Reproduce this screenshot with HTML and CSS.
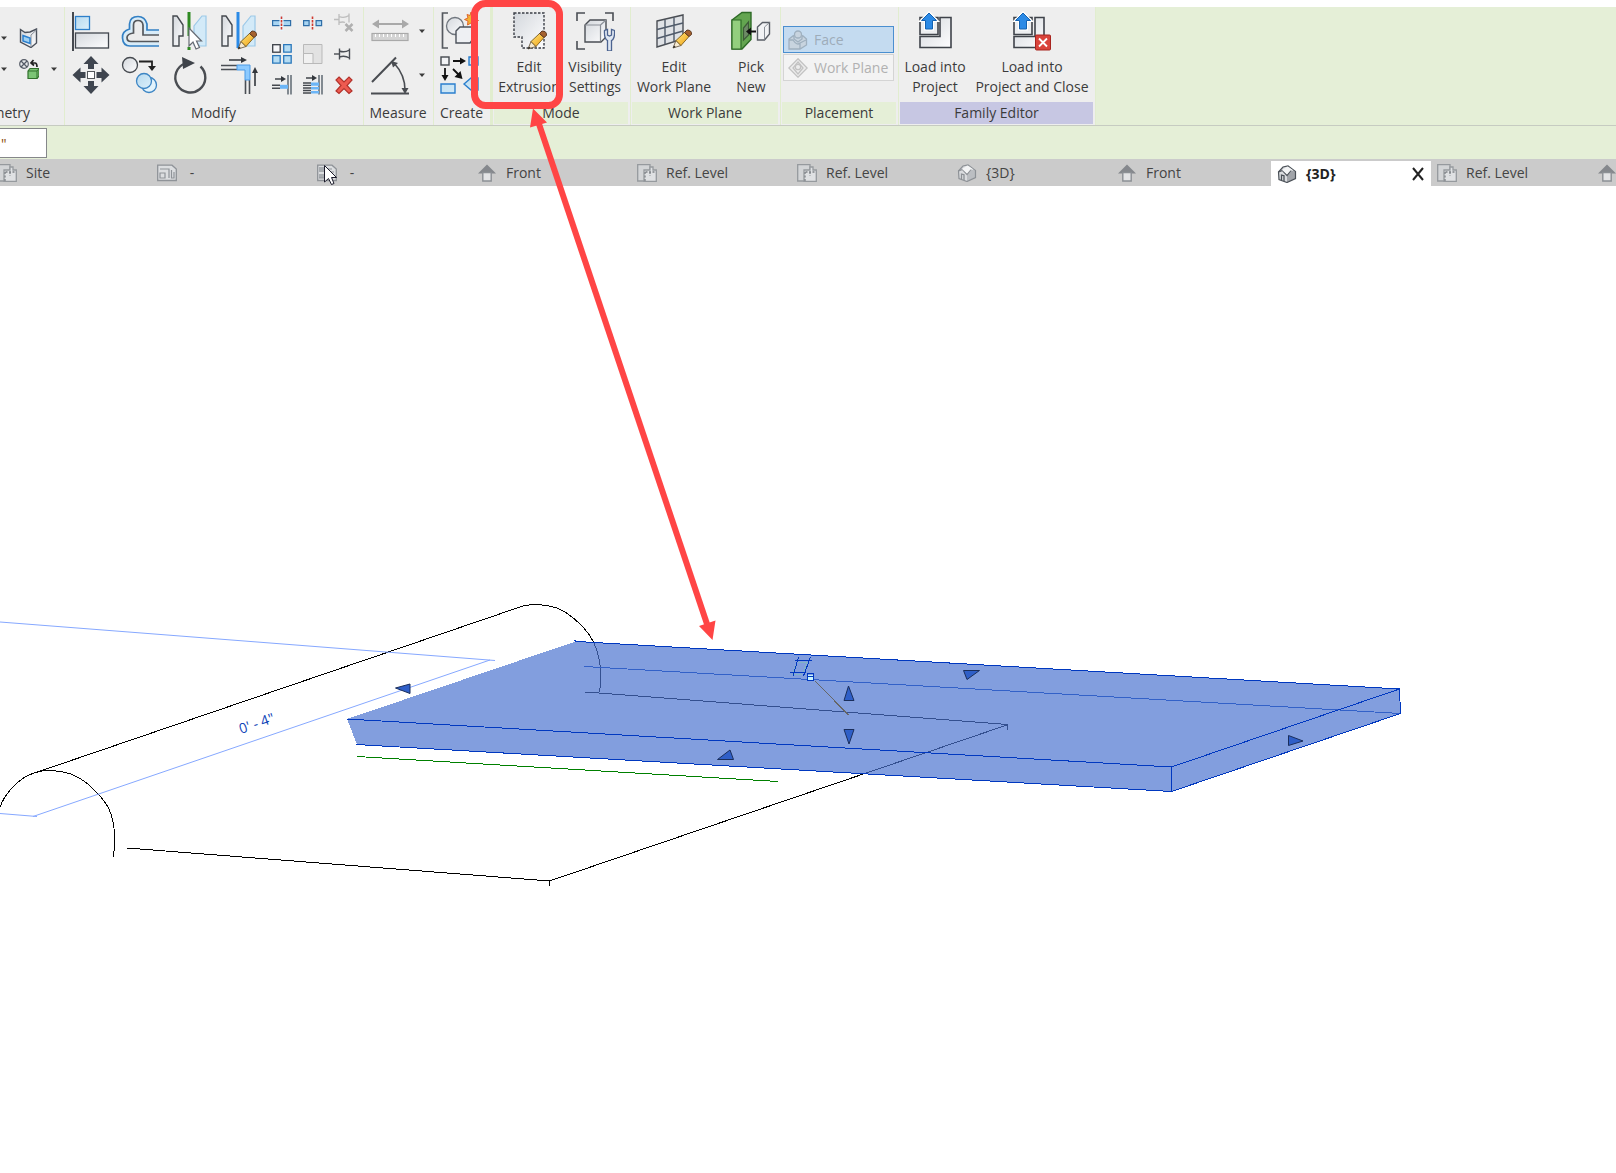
FILE: index.html
```html
<!DOCTYPE html>
<html lang="en">
<head>
  <meta charset="utf-8">
  <title>Family Editor</title>
  <link rel="stylesheet" href="styles.css">
</head>
<body>

  <!-- shared icon parts -->
  <svg class="defs" aria-hidden="true">
    <defs>
      <linearGradient id="silver" x1="0" y1="0" x2="1" y2="1">
        <stop offset="0" stop-color="#d4d8dd"/><stop offset="1" stop-color="#fdfdfe"/>
      </linearGradient>
      <linearGradient id="sky" x1="0" y1="0" x2="1" y2="1">
        <stop offset="0" stop-color="#b7d9ee"/><stop offset="1" stop-color="#dcf0fb"/>
      </linearGradient>
      <linearGradient id="gold" x1="0" y1="0" x2="1" y2="1">
        <stop offset="0" stop-color="#ffe680"/><stop offset="1" stop-color="#f0a010"/>
      </linearGradient>
      <symbol id="pencil" viewBox="0 0 20 20">
        <path d="M1 19L4 11.500L9 16.500Z" fill="#f6ead2" stroke="#5a4a35" stroke-width=".8"/>
        <path d="M1 19l1-2.600 1.700 1.600z" fill="#222"/>
        <path d="M4 11.500L12.500 3.500L17 7.500L9 16.500Z" fill="url(#gold)" stroke="#7a5a1a" stroke-width=".9"/>
        <path d="M12.500 3.500L15 1Q20 1 19.500 5.500L17 7.500Z" fill="#a5622f" stroke="#54301a" stroke-width=".9"/>
      </symbol>
      <symbol id="t-plan" viewBox="0 0 20 18">
        <path d="M.7.700H13V17H.7Z" fill="#d3d5d7" stroke="#969a9e" stroke-width="1.300"/>
        <path d="M7 6H13V3H16V6H19.300V17.300H7Z" fill="#dfe1e3" stroke="#969a9e" stroke-width="1.300"/>
        <path d="M8.500 8H18M8 8v9M13 8v4" fill="none" stroke="#7f8388" stroke-width="1.300" stroke-dasharray="2 1.500"/>
      </symbol>
      <symbol id="t-sheet" viewBox="0 0 20 18">
        <path d="M.7 1.200H15L19.300 5V16.500H.7Z" fill="#dcdee0" stroke="#8f9398" stroke-width="1.300"/>
        <path d="M3 5h9v9M3 9h5v5H3zM14.500 6v8h2.500V8" fill="none" stroke="#8f9398" stroke-width="1.200"/>
      </symbol>
      <symbol id="t-sched" viewBox="0 0 20 18">
        <path d="M.7 1.200H15L19.300 5V16.500H.7Z" fill="#dcdee0" stroke="#8f9398" stroke-width="1.300"/>
        <path d="M2 3h7v5H2zM2 10h7v4H2z" fill="#a8acb0"/>
        <path d="M10 5h5M10 8h7M10 12h7M2 14h14" stroke="#8f9398" fill="none"/>
      </symbol>
      <symbol id="t-elev" viewBox="0 0 20 18">
        <path d="M1 9.500L10 .5L19 9.500Z" fill="#85888d"/>
        <path d="M5.800 8.500H14.200V17H5.800Z" fill="#e3e4e6" stroke="#8c9095" stroke-width="1.400"/>
      </symbol>
      <symbol id="t-home" viewBox="0 0 20 18">
        <path d="M1.500 7L6 2L11 .8L18.500 6.500V13.500L10 17.500L2 14.500Z" fill="#dadcdf" stroke="currentColor" stroke-width="1.200"/>
        <path d="M10 17.500V10.500L14 5L18.500 7V13.500Z" fill="currentColor" opacity=".4"/>
        <path d="M1.500 7L5.500 5.500L10 10.500L14 5M4.500 15V10l2.500.7V16" fill="none" stroke="currentColor" stroke-width="1.300"/>
        <path d="M5 5L10.500 1.500L16.500 5.500L13.500 5.500L10 9.500Z" fill="#f3f4f5"/>
      </symbol>
      <symbol id="caret" viewBox="0 0 8 8"><path d="M1 2.500h6L4 6z" fill="currentColor"/></symbol>
    </defs>
  </svg>

  <header class="ribbon">
    <section class="panel panel-geometry">
      <div class="panel-body geometry-tools">
        <button class="drop" aria-label="Cope options"><svg><use href="#caret"/></svg></button>
        <button class="tool-sm" aria-label="Wall opening">
          <svg viewBox="0 0 20 20"><path d="M1.500 1.500L6 4.500L11 4L17.500 1V15L12 19.500L1.500 14Z" fill="url(#silver)" stroke="#4b515c" stroke-width="1.400"/><path d="M12 19V7l5.500-5" fill="none" stroke="#8a919b"/><path d="M4 7.500l7 2.500v5.500L4 13z" fill="#9fd0f2" stroke="#2b7fce" stroke-width="1.500"/></svg>
        </button>
        <span></span>
        <button class="drop" aria-label="Join options"><svg><use href="#caret"/></svg></button>
        <button class="tool-sm" aria-label="Paint">
          <svg viewBox="0 0 20 20"><circle cx="5" cy="5" r="4.300" fill="#e6e8ea" stroke="#555b66" stroke-width="1.200"/><path d="M2 2l6 6M8 2L2 8" stroke="#555b66" stroke-width="1.300"/><path d="M13 4h3q2 0 2 4M14.500 1L12 4l3 2.500" fill="none" stroke="#222" stroke-width="1.700"/><path d="M9 12l2-2.500h9V17l-2 2.500H9z" fill="#7cc576" stroke="#31702c" stroke-width="1.200"/><path d="M9 12h9v7.500M18 12l2-2.500" fill="none" stroke="#31702c"/></svg>
        </button>
        <button class="drop" aria-label="Paint options"><svg><use href="#caret"/></svg></button>
      </div>
      <h2 class="panel-title">Geometry</h2>
    </section>

    <section class="panel panel-modify">
      <div class="panel-body modify-tools">
        <div class="grid-lg">
          <button class="tool" aria-label="Align">
            <svg viewBox="0 0 40 40"><path d="M2 1v39" stroke="#45494f" stroke-width="2"/><rect x="4.500" y="5.500" width="14" height="13" fill="url(#sky)" stroke="#2d7fca" stroke-width="1.300"/><rect x="4.500" y="22" width="33" height="15" fill="url(#silver)" stroke="#40464e" stroke-width="1.300"/></svg>
          </button>
          <button class="tool" aria-label="Offset">
            <svg viewBox="0 0 40 40" fill="none"><path d="M38 19H26V13Q24 5.500 17 5.500Q9 5.500 8.500 13V18Q1 20 1.500 27Q2 35 9 35H38" fill="#d9ecf8" stroke="#3380c4" stroke-width="1.700"/><path d="M38 24H22V14Q21.500 9.500 17 9.500Q12.500 9.500 12.500 14V22Q6 23 6 26.500Q6 30.500 10 30.500H38" fill="#ececec" stroke="#55585c" stroke-width="1.700"/></svg>
          </button>
          <button class="tool" aria-label="Mirror - Pick Axis">
            <svg viewBox="0 0 40 40"><path d="M2 5h4l6 9v11H8v10H2z" fill="url(#silver)" stroke="#45494f" stroke-width="1.400"/><path d="M35 5h-4l-8 10v19h5v1h7z" fill="#d3eaf8" stroke="#9cc9e8" stroke-width="1.200"/><path d="M18 1v24M18 36v3" stroke="#2f8a22" stroke-width="3"/><path d="M18 17v18l4-4 3 7 3.500-1.500-3-6.500h5z" fill="#fff" stroke="#666b73" stroke-width="1.200"/></svg>
          </button>
          <button class="tool" aria-label="Mirror - Draw Axis">
            <svg viewBox="0 0 40 40"><path d="M1 5h4l6 9v11H7v10H1z" fill="url(#silver)" stroke="#45494f" stroke-width="1.400"/><path d="M34 5h-4l-8 10v20h12z" fill="#d3eaf8" stroke="#9cc9e8" stroke-width="1.200"/><path d="M17 1v36" stroke="#2b8ae6" stroke-width="3"/><use href="#pencil" x="16" y="19" width="20" height="20"/></svg>
          </button>
          <button class="tool" aria-label="Move">
            <svg viewBox="0 0 40 40"><path d="M20 1l7.500 8H23v5h-6V9h-4.500zM20 39l7.500-8H23v-5h-6v5h-4.500zM1.500 20l8-7.500V17h5v6h-5v4.500zM38.500 20l-8-7.500V17h-5v6h5v4.500z" fill="#3f454f"/><rect x="16.500" y="16.500" width="7" height="7" fill="#fff" stroke="#55585c"/></svg>
          </button>
          <button class="tool" aria-label="Copy">
            <svg viewBox="0 0 40 40"><circle cx="9" cy="10" r="7.500" fill="url(#silver)" stroke="#45494f" stroke-width="1.300"/><circle cx="28" cy="30" r="7.500" fill="#e3f3fc" stroke="#3c85c4" stroke-width="1.300"/><circle cx="23" cy="26" r="7.500" fill="url(#sky)" stroke="#3c85c4" stroke-width="1.300"/><path d="M18 6.500h13V12" fill="none" stroke="#222" stroke-width="1.800"/><path d="M27 11h8l-4 5z" fill="#222"/></svg>
          </button>
          <button class="tool" aria-label="Rotate">
            <svg viewBox="0 0 40 40"><path d="M29.500 11.500A15 15 0 1 1 14 8.500" fill="none" stroke="#4a4d52" stroke-width="2.400"/><path d="M11 2l13 6-12 6z" fill="#3f434a"/></svg>
          </button>
          <button class="tool" aria-label="Trim/Extend to Corner">
            <svg viewBox="0 0 40 40" fill="none"><path d="M0 10.500h16M0 14.500h16M24.500 25v14M28.500 25v14" stroke="#4a4e54" stroke-width="1.600"/><path d="M16 10h13v15h-5V15h-8z" fill="#8ccaff" stroke="#4a9ae6"/><path d="M8 5h16M34 31V15" stroke="#33373d" stroke-width="1.600"/><path d="M20 2l6 3-6 3zM31 18l3-6 3 6z" fill="#33373d"/></svg>
          </button>
        </div>
        <div class="grid-sm">
          <button class="tool-sm" aria-label="Split Element">
            <svg viewBox="0 0 20 20"><rect x=".6" y="7.600" width="18" height="5" fill="#a9d5f2" stroke="#2f6ea8" stroke-width="1.200"/><path d="M9.500 3v15" stroke="#e9f4fb" stroke-width="4"/><path d="M9.500 3.500v14" stroke="#d03a30" stroke-width="1.600" stroke-dasharray="2.500 1"/></svg>
          </button>
          <button class="tool-sm" aria-label="Split with Gap">
            <svg viewBox="0 0 20 20"><path d="M.6 7.600h5.500v5H.6zM13.100 7.600h5.500v5h-5.500z" fill="#a9d5f2" stroke="#2f6ea8" stroke-width="1.200"/><path d="M9.500 3.500v14" stroke="#d03a30" stroke-width="1.600" stroke-dasharray="2.500 1"/></svg>
          </button>
          <button class="tool-sm" aria-label="Unpin" disabled>
            <svg viewBox="0 0 20 20"><path d="M0 6.500h4.500M5 1v11M15 .5v9M5 3.500q5 2 10-1M5 9.500q4-1 6 0" fill="none" stroke="#bdbdbd" stroke-width="1.300"/><path d="M11.500 11l7 7M18.500 11l-7 7" stroke="#b0b0b0" stroke-width="2.500"/></svg>
          </button>
          <button class="tool-sm" aria-label="Array">
            <svg viewBox="0 0 20 20" stroke-width="1.300"><rect x=".7" y=".7" width="7.500" height="7.500" fill="#f6f6f8" stroke="#3a3e46"/><path d="M11.700.7h7.500v7.500h-7.500zM.7 11.700h7.500v7.500H.7zM11.700 11.700h7.500v7.500h-7.500z" fill="#b5dcf3" stroke="#2b78bb"/></svg>
          </button>
          <button class="tool-sm" aria-label="Scale" disabled>
            <svg viewBox="0 0 20 20" fill="#e2e2e2" stroke="#b9b9b9"><path d="M.5.500h18.500v19H.5z"/><path d="M.5 9.500h9.500v10H.5z" fill="#f1f1f1"/></svg>
          </button>
          <button class="tool-sm" aria-label="Pin">
            <svg viewBox="0 0 20 20"><path d="M0 10h5" stroke="#4a4e54" stroke-width="1.400"/><path d="M5.500 4.500v11M15.500 4.500v11M5.500 7q5 2 10-1M5.500 13q5-2 10 1" fill="none" stroke="#4a4e54" stroke-width="1.400"/></svg>
          </button>
          <button class="tool-sm" aria-label="Trim/Extend Single">
            <svg viewBox="0 0 20 20"><path d="M16 0v19.500M19 0v19.500" stroke="#55606a" stroke-width="1.400"/><path d="M0 10.300h8M0 13.300h8" stroke="#45494f" stroke-width="1.400"/><rect x="8" y="9.800" width="8" height="4" fill="#6bb5f7"/><path d="M3 4h9" stroke="#33373d" stroke-width="1.400"/><path d="M9 1l5 3-5 3z" fill="#33373d"/></svg>
          </button>
          <button class="tool-sm" aria-label="Trim/Extend Multiple">
            <svg viewBox="0 0 20 20"><path d="M16 0v19.500M19 0v19.500" stroke="#55606a" stroke-width="1.400"/><path d="M0 8h8M0 10.300h8M0 13h8M0 15.500h8M0 18h8" stroke="#45494f" stroke-width="1.300"/><path d="M8 7.500h8v3.300H8zM8 12h8v2.500H8zM8 16h8v2.500H8z" fill="#6bb5f7"/><path d="M3 3h9" stroke="#33373d" stroke-width="1.400"/><path d="M9 0l5 3-5 3z" fill="#33373d"/></svg>
          </button>
          <button class="tool-sm" aria-label="Delete">
            <svg viewBox="0 0 20 20"><path d="M5 2l5 5 5-5 3 3-5 5.500 5 5.500-3 2.500-5-5-5 5-3-2.500 5-5.500L2 5z" fill="#ee5a50" stroke="#b3322b" stroke-width="1.200"/></svg>
          </button>
        </div>
      </div>
      <h2 class="panel-title">Modify</h2>
    </section>

    <section class="panel panel-measure">
      <div class="panel-body measure-tools">
        <button class="tool" aria-label="Measure" disabled>
          <svg viewBox="0 0 40 40"><path d="M5 13h30" stroke="#a9a9a9" stroke-width="2"/><path d="M1 13l7-4.500v9zM38 13l-7-4.500v9z" fill="#a9a9a9"/><rect x="1" y="22.500" width="36" height="7" fill="#d4d4d4" stroke="#a9a9a9" stroke-width="1.200"/><path d="M4.500 23v3M8.500 23v3M12.500 23v3M16.500 23v3M20.500 23v3M24.500 23v3M28.500 23v3M32.500 23v3" stroke="#fff"/></svg>
        </button>
        <button class="drop" aria-label="Measure options"><svg><use href="#caret"/></svg></button>
        <button class="tool" aria-label="Angular Dimension">
          <svg viewBox="0 0 40 40" fill="none" stroke="#4a4d52" stroke-width="2"><path d="M1 27L25 2.500M0 38.500h38" /><path d="M23 8Q34 20 34 35" stroke-width="1.600"/><path d="M20 6l7 2-5 4.500zM30.500 33h7L34 39z" fill="#4a4d52" stroke="none"/></svg>
        </button>
        <button class="drop" aria-label="Dimension options"><svg><use href="#caret"/></svg></button>
      </div>
      <h2 class="panel-title">Measure</h2>
    </section>

    <section class="panel panel-create">
      <div class="panel-body create-tools">
        <button class="tool" aria-label="Create Group">
          <svg viewBox="0 0 40 40"><path d="M8 2H2.500v35H8M31 2h5.500v35H31" fill="none" stroke="#55595f" stroke-width="1.700"/><circle cx="15" cy="15" r="8.500" fill="url(#silver)" stroke="#70767e" stroke-width="1.300"/><path d="M31 1l2 4 4-1.500L35.500 7l3 2.500-4 1 0 4-3.500-2.500-3.500 2 .5-4-3.500-1.500 3.500-1.500-1-3.500 3 1z" fill="#f2b233" stroke="#e0672c"/><path d="M16 20l4-4h13v12l-3 4H16z" fill="#eef0f3" stroke="#4c525b" stroke-width="1.400"/></svg>
        </button>
        <button class="tool" aria-label="Create Similar">
          <svg viewBox="0 0 40 40" stroke-width="1.400"><rect x="1" y="2" width="8" height="8" fill="#f2f3f5" stroke="#45494f"/><path d="M29 2h9v8h-9zM1 29h14v9H1z" fill="url(#sky)" stroke="#2b7fce"/><path d="M24 29l7-6h7v12h-7z" fill="url(#sky)" stroke="#2b7fce"/><path d="M13 6h8M5 13v9M13 14l6 6" stroke="#111" stroke-width="1.800"/><path d="M20 2.500L26 6l-6 3.500zM1.500 20h7L5 26zM22.500 24l-8-2 6-6z" fill="#111"/></svg>
        </button>
      </div>
      <h2 class="panel-title">Create</h2>
    </section>

    <section class="panel panel-mode">
      <div class="panel-body">
        <button class="command">
          <svg viewBox="0 0 40 40"><path d="M5 2h30v35H13V26H5z" fill="url(#silver)" stroke="#3a3e46" stroke-width="1.400" stroke-dasharray="2.500 1.500"/><use href="#pencil" x="18" y="19" width="20" height="20"/></svg>
          Edit<br>Extrusion
        </button>
        <button class="command">
          <svg viewBox="0 0 40 40"><path d="M10 2H2v8M30 2h8v8M2 30v8h8" fill="none" stroke="#4a4e54" stroke-width="1.600"/><path d="M10 14l5-5h16v17l-5 5H10z" fill="url(#silver)" stroke="#4a4e54" stroke-width="1.400"/><path d="M10 14h15.500v16M25.500 14L31 9" fill="none" stroke="#8b9097" stroke-width="1.200"/><path d="M29.500 19.500Q29 28 32.500 29.500V40h4V29.500Q40 28 39.500 19.500L36.500 18.500V24l-2 1-2-1V18.500z" fill="#dfe7f2" stroke="#4c6390" stroke-width="1.300"/></svg>
          Visibility<br>Settings
        </button>
      </div>
      <h2 class="panel-title">Mode</h2>
    </section>

    <section class="panel panel-workplane">
      <div class="panel-body">
        <button class="command command-plane">
          <svg viewBox="0 0 40 40"><path d="M3 10L29 4v24L3 36z" fill="#dfe2e6" stroke="#4a4e54" stroke-width="1.400"/><path d="M11 8.500v25M20 6.500v24M3 18.500L29 12M3 27.500L29 20" fill="none" stroke="#4f5a6a" stroke-width="1.400"/><use href="#pencil" x="18" y="18" width="20" height="20"/></svg>
          Edit<br>Work Plane
        </button>
        <span class="divider"></span>
        <button class="command">
          <svg viewBox="0 0 40 40"><path d="M1 9L11 1.500h9v27L11 38H1z" fill="#63a550" stroke="#2e6b27" stroke-width="1.400"/><path d="M1 9h9v29H1z" fill="#93cf7e" stroke="#2e6b27" stroke-width="1.200"/><path d="M12.500 17l5-6v13l-5 5z" fill="#6d8a66" stroke="#3d5c38" stroke-width="1.200"/><path d="M26.500 16l5-4.500h7V23l-5 6h-7z" fill="#f2f3f5" stroke="#5a5f67" stroke-width="1.400"/><path d="M33.500 28.500V16l5-4.500" fill="none" stroke="#8a9097"/><path d="M18 20.500h7" stroke="#111" stroke-width="2"/><path d="M20 16.500v8L15 20.500z" fill="#111"/></svg>
          Pick<br>New
        </button>
      </div>
      <h2 class="panel-title">Work Plane</h2>
    </section>

    <section class="panel panel-placement">
      <div class="panel-body placement-tools">
        <button class="place is-on" disabled>
          <svg viewBox="0 0 20 20" fill="#c8d4df" stroke="#9fb0bf" stroke-width="1.300"><path d="M1 9l4-3h10l3.500 3v6L12 19H1z"/><path d="M1 10h4q4 6 7 3l6-3M12 13.500V19" fill="none"/><path d="M6 5v4l4 3 4-3V5"/><circle cx="10" cy="4.500" r="3.500"/></svg>
          Face
        </button>
        <button class="place" disabled>
          <svg viewBox="0 0 20 20" fill="#ececec" stroke="#c2c2c2" stroke-width="1.300"><path d="M10 .8L19.200 10L10 19.200L.8 10Z"/><path d="M10 4l5 6-5 6-5-6z"/><circle cx="10" cy="9" r="2.700"/></svg>
          Work Plane
        </button>
      </div>
      <h2 class="panel-title">Placement</h2>
    </section>

    <section class="panel panel-family">
      <div class="panel-body">
        <button class="command">
          <svg viewBox="0 0 40 40"><path d="M25 6.500h11v30H5v-11h20z" fill="url(#silver)" stroke="#3f434a" stroke-width="1.600"/><path d="M5 6.500h18v17H5z" fill="#eceef0" stroke="#3f434a" stroke-width="1.600"/><path d="M14 2l7.500 7.500h-4V18h-7V9.500h-4z" fill="#2b8ae6" stroke="#fff" stroke-width="3"/><path d="M14 2l7.500 7.500h-4V18h-7V9.500h-4z" fill="#2b8ae6" stroke="#1462b0"/></svg>
          Load into<br>Project
        </button>
        <button class="command command-wide">
          <svg viewBox="0 0 40 40"><path d="M23 6.500h9v30H2v-11h21z" fill="url(#silver)" stroke="#3f434a" stroke-width="1.600"/><path d="M2 6.500h18v17H2z" fill="#eceef0" stroke="#3f434a" stroke-width="1.600"/><path d="M11 2l7.500 7.500h-4V18h-7V9.500h-4z" fill="#2b8ae6" stroke="#fff" stroke-width="3"/><path d="M11 2l7.500 7.500h-4V18h-7V9.500h-4z" fill="#2b8ae6" stroke="#1462b0"/><rect x="23.500" y="24" width="15" height="15" rx="1" fill="#d9443c" stroke="#a8241f"/><path d="M27 27.500l8 8M35 27.500l-8 8" stroke="#fff" stroke-width="1.800"/></svg>
          Load into<br>Project and Close
        </button>
      </div>
      <h2 class="panel-title">Family Editor</h2>
    </section>
  </header>

  <div class="options-bar">
    <input class="offset" type="text" value='1"' aria-label="Offset">
  </div>

  <nav class="view-tabs">
    <a class="tab tab-first" href="#"><svg><use href="#t-plan"/></svg>Site</a>
    <a class="tab" href="#"><svg><use href="#t-sheet"/></svg>&nbsp;-</a>
    <a class="tab" href="#"><svg><use href="#t-sched"/></svg>&nbsp;-</a>
    <a class="tab" href="#"><svg><use href="#t-elev"/></svg>Front</a>
    <a class="tab" href="#"><svg><use href="#t-plan"/></svg>Ref. Level</a>
    <a class="tab" href="#"><svg><use href="#t-plan"/></svg>Ref. Level</a>
    <a class="tab" href="#"><svg><use href="#t-home"/></svg>{3D}</a>
    <a class="tab" href="#"><svg><use href="#t-elev"/></svg>Front</a>
    <div class="tab is-active">
      <a href="#"><svg><use href="#t-home"/></svg>{3D}</a>
      <button class="close" aria-label="Close view"><svg viewBox="0 0 14 14"><path d="M2 1l10 12M12 1L2 13" stroke="#222" stroke-width="2"/></svg></button>
    </div>
    <a class="tab" href="#"><svg><use href="#t-plan"/></svg>Ref. Level</a>
    <a class="tab" href="#" aria-label="Elevation"><svg><use href="#t-elev"/></svg></a>
  </nav>

  <main class="canvas">
    <svg class="model" role="img" aria-label="3D view with the selected extrusion">
      <g transform="translate(0 -186)" fill="none">
        <g class="edge">
          <path d="M37.500 772L520 607Q527 604.500 537 604.500Q548 605 557 608Q565 611 572 617Q586 628 593 641Q599 654 600 665Q601.500 680 599.500 692"/>
          <path d="M0 807Q4 796 13 787Q22 777 34 773Q43 770 52 770.500Q62 771 71 774Q86 780 97 793Q105 801 109 809Q114 820 114.500 835V846L113.500 857"/>
          <path d="M585 692L599 693L1007 724.500V729.500M1007 725L549.500 881V885.500M127 848L549.500 881"/>
        </g>
        <path class="extrusion" d="M577 641L1399.500 689L1400.500 713.500L1171.500 791.500L357 744.500L347 719Z"/>
        <path class="edge-hidden" d="M584 666.500L1400.500 713.500"/>
        <path class="edge-selected" d="M574 640.500L577 641.500L1399.500 689L1400.500 713.500L1171.500 791.500L356 744.500M347 719L1171.500 767L1399.500 689M1171.500 767V791.500"/>
        <path class="ref-line" d="M357 756.500L778 781.500"/>
        <path class="dimension" d="M0 622L495 660.500M490 660L33 816.500M0 813.500L37 816.500"/>
        <path d="M815 681L848.500 715" stroke="#666"/>
        <path d="M798 662.500h10M792 674.500h10M797 662l-4 11M807 662l-4 11" stroke="#7fb3c4"/>
        <path class="edge-selected" d="M795 660.500H812M790 672.500H806M798.500 657L793 676M810.500 657L803.500 676"/>
        <path d="M808 675h6v5h-6z" fill="#c8f4ff"/>
        <path class="edge-selected" d="M807.500 680.500v-7h6v7zM807.500 676.500h6"/>
        <g class="grip">
          <path d="M963.500 670.500H979.500L967 679.500Z"/>
          <path d="M848.500 686L844 700.500H854Z"/>
          <path d="M844 729.500H854L849 744Z"/>
          <path d="M717.500 759.500L730 750L733.500 759.500Z"/>
          <path d="M1288.500 735.500L1303 741L1288.500 745.500Z"/>
          <path d="M395.500 688L410 684V693.500Z"/>
        </g>
        <text class="dim-text" transform="translate(241 734) rotate(-19)">0' - 4"</text>
      </g>
    </svg>
  </main>

  <!-- callout drawn over the whole window -->
  <svg class="callout" aria-hidden="true">
    <rect x="474.500" y="3.500" width="85" height="102" rx="11"/>
    <path d="M539 124L707 624" class="shaft"/>
    <path d="M533 108.500L530 127.500L547 122.500ZM712.500 640L699 626L715.500 620.500Z" class="head"/>
    <path d="M324.500 165.500V182L328.500 178.500L331.500 184.500L334 183.500L331.500 177.500H336.500Z" class="pointer"/>
  </svg>

</body>
</html>
```

FILE: styles.css
```css
* {
  box-sizing: border-box;
}

body {
  margin: 0;
  padding-top: 7px;
  min-height: 100vh;
  display: flex;
  flex-direction: column;
  background: #fff;
  color: #3b3b3b;
  font-family: "Open Sans", "Noto Sans", sans-serif;
  font-size: 14px;
  line-height: 20px;
  overflow: hidden;
}

button {
  margin: 0;
  padding: 0;
  border: 0;
  background: none;
  color: inherit;
  font: inherit;
  flex: none;
}

a {
  color: inherit;
  text-decoration: none;
}

svg {
  display: block;
}

.defs {
  position: absolute;
  width: 0;
  height: 0;
}

/* ribbon */
.ribbon {
  display: flex;
  background: #e5efd7;
  border-bottom: 1px solid #c6cbc1;
}

.panel {
  flex: none;
  display: flex;
  flex-direction: column;
  background: #eee;
  border-right: 1px solid #e1edcf;
}

.panel-body {
  height: 95px;
  padding-top: 4px;
  display: flex;
}

.panel-title {
  margin: 0 2px 1px 1px;
  height: 22px;
  display: flex;
  justify-content: center;
  align-items: center;
  font-size: 14px;
  font-weight: normal;
}

.panel-geometry {
  width: 65px;
  overflow: hidden;
}

.panel-geometry .panel-title {
  justify-content: flex-end;
  padding-right: 32px;
}

.geometry-tools {
  display: grid;
  grid-template-columns: 8px 20px 8px;
  grid-template-rows: 20px 20px;
  column-gap: 11px;
  row-gap: 11px;
  padding-top: 21px;
  align-items: center;
}

.panel-modify {
  width: 299px;
}

.modify-tools {
  gap: 11px;
  padding-left: 6px;
}

.grid-lg {
  display: grid;
  grid-template-columns: repeat(4, 40px);
  grid-template-rows: 40px 40px;
  gap: 4px 10px;
}

.grid-sm {
  display: grid;
  grid-template-columns: repeat(3, 20px);
  grid-template-rows: repeat(3, 20px);
  gap: 11px;
  padding-top: 2px;
}

.tool svg {
  width: 40px;
  height: 40px;
}

.tool-sm svg {
  width: 20px;
  height: 20px;
}

.drop svg {
  width: 8px;
  height: 8px;
}

.panel-measure {
  width: 70px;
}

.measure-tools {
  display: grid;
  grid-template-columns: 40px 8px;
  grid-template-rows: 40px 40px;
  gap: 4px 7px;
  padding-left: 7px;
  align-items: center;
}

.panel-create {
  width: 59px;
  border-right-width: 3px;
}

.create-tools {
  flex-direction: column;
  gap: 4px;
  padding-left: 6px;
}

.command {
  width: 66px;
  height: 86px;
  text-align: center;
  white-space: nowrap;
}

.command svg {
  width: 40px;
  height: 40px;
  margin: 0 auto 6px;
}

.command-plane {
  width: 82px;
}

.command-wide {
  width: 120px;
}

.panel-mode {
  width: 138px;
}

.panel-mode .panel-body {
  padding-left: 3px;
}

.panel-workplane {
  width: 150px;
}

.panel-workplane .panel-body {
  padding-left: 2px;
}

.divider {
  width: 1px;
  height: 90px;
  margin: -2px 0 0 6px;
  background: #c9c9c9;
}

.panel-workplane .command:last-child {
  width: 60px;
}

.panel-placement {
  width: 118px;
}

.placement-tools {
  flex-direction: column;
  gap: 1px;
  padding: 19px 4px 0 2px;
}

.place {
  height: 27px;
  display: flex;
  align-items: center;
  gap: 6px;
  padding-left: 4px;
  background: #f3f3f3;
  border: 1px solid #d4d4d4;
  color: #b1b1b1;
  white-space: nowrap;
}

.place svg {
  flex: none;
  width: 20px;
  height: 20px;
}

.place.is-on {
  background: #c4dbf0;
  border-color: #4a8fd0;
  color: #9eacb9;
}

.panel-family {
  width: 197px;
}

.panel-family .panel-body {
  gap: 4px;
  padding-left: 3px;
}

.panel-mode .panel-title,
.panel-workplane .panel-title,
.panel-placement .panel-title {
  background: #e5efd7;
}

.panel-family .panel-title {
  background: #c7c7e3;
}

/* options bar */
.options-bar {
  height: 33px;
  padding-top: 2px;
  background: #e5efd7;
}

.offset {
  display: block;
  width: 47px;
  height: 30px;
  padding: 0;
  border: 1px solid #85878a;
  border-left: 0;
  background: #fff;
  color: #8a4b08;
  font: inherit;
  text-indent: -7px;
}

/* view tabs */
.view-tabs {
  height: 27px;
  display: flex;
  background: #cbcbcb;
  overflow: hidden;
}

.tab {
  flex: none;
  width: 160px;
  padding-left: 6px;
  display: flex;
  align-items: center;
  gap: 9px;
  color: #444;
}

.tab-first {
  margin-left: -9px;
}

.tab svg {
  width: 20px;
  height: 18px;
  color: #8d9196;
}

.tab a {
  display: flex;
  align-items: center;
  gap: 9px;
}

.tab.is-active {
  margin-top: 2px;
  justify-content: space-between;
  padding-right: 6px;
  background: #fff;
  color: #222;
  font-weight: bold;
}

.is-active svg {
  color: #4b5158;
}

.close svg {
  width: 14px;
  height: 14px;
}

/* drawing area */
.canvas {
  flex: 1;
  display: flex;
}

.model {
  flex: 1;
  min-height: 700px;
  shape-rendering: crispEdges;
}

.edge {
  stroke: #000;
}

.extrusion {
  fill: rgba(75, 115, 207, 0.694);
}

.edge-selected {
  stroke: #0038c0;
}

.edge-hidden {
  stroke: #3361c8;
}

.ref-line {
  stroke: #008000;
}

.dimension {
  stroke: #86a8ff;
  shape-rendering: auto;
}

.grip {
  fill: #2f5fc8;
  stroke: #1a2e5c;
  shape-rendering: auto;
}

.dim-text {
  fill: #0f45b8;
  font-size: 14px;
}

.callout {
  position: absolute;
  top: 0;
  left: 0;
  width: 100%;
  height: 100%;
  pointer-events: none;
  fill: none;
  stroke: #ff4545;
  stroke-width: 7px;
}

.callout .shaft {
  stroke-width: 6px;
}

.callout .head {
  fill: #ff4545;
  stroke: none;
}

.callout .pointer {
  fill: #fff;
  stroke: #1b1b2a;
  stroke-width: 1px;
}
```
